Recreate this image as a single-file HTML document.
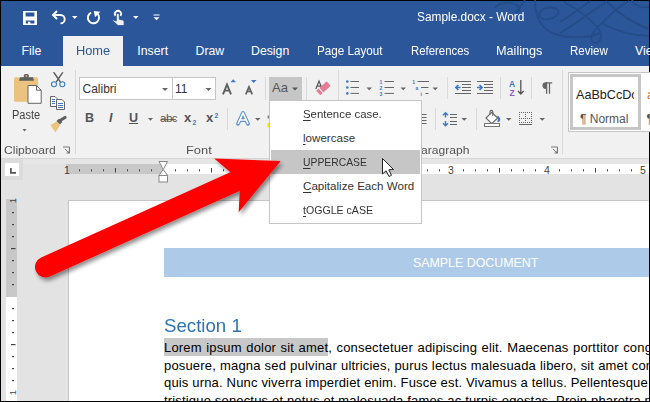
<!DOCTYPE html>
<html><head><meta charset="utf-8">
<style>
*{margin:0;padding:0;box-sizing:border-box}
html,body{width:650px;height:402px;overflow:hidden;background:#000}
body{font-family:"Liberation Sans",sans-serif;position:relative}
.a{position:absolute}
svg{position:absolute;overflow:visible}
#title{left:1px;top:1px;width:648px;height:35px;background:#2B579A}
#tabs{left:1px;top:36px;width:648px;height:30px;background:#2B579A}
.tab{position:absolute;top:36px;height:30px;color:#fff;font-size:12.3px;line-height:31px;white-space:nowrap}
#ribbon{left:1px;top:66px;width:648px;height:92px;background:#F1F1F1}
#rbline{left:1px;top:158px;width:648px;height:1px;background:#D6D6D6}
#docbg{left:1px;top:159px;width:648px;height:242px;background:#E3E3E3}
#page{left:68px;top:200px;width:581px;height:201px;background:#fff;border-left:1px solid #C6C6C6;border-top:1px solid #C6C6C6}
.lbl{position:absolute;font-size:11.5px;color:#555;white-space:nowrap;line-height:14px;transform:scaleX(1.05);transform-origin:0 0}
.sep{position:absolute;width:1px;background:#D9D9D9}
.dd{position:absolute;width:0;height:0;border-left:3px solid transparent;border-right:3px solid transparent;border-top:3px solid #666}
.mi{position:absolute;left:303px;font-size:11.6px;color:#333;white-space:nowrap;line-height:14px}
.mi u{text-decoration:underline;text-decoration-thickness:1px;text-underline-offset:1.5px}
.body{position:absolute;left:164px;font-size:13px;letter-spacing:0.17px;color:#000;white-space:nowrap;line-height:17px}
</style></head><body>
<div class="a" id="title"></div>
<div class="a" id="tabs"></div>
<div class="a" id="ribbon"></div>
<div class="a" id="rbline"></div>
<div class="a" id="docbg"></div>

<!-- swirl decoration -->
<svg style="left:0;top:0" width="650" height="66" viewBox="0 0 650 66">
 <g fill="none" stroke="#244C89" stroke-width="1.9">
  <path d="M495 8 C498 3 508 1 515 4 C519 6 520 9 519 12"/>
  <path d="M516 13 C519 8 522 4 525 0"/>
  <path d="M535 0 C535 8 536 16 540 22 C545 30 555 36 570 37 C585 38 592 36 600 33"/>
  <path d="M541 18 C536 14 542 7 551 7.5 C558 8 561 12 556 16 C551 20 544 20 541 18"/>
  <path d="M560 33 C575 25 590 12 606 2"/>
  <path d="M564 2 C575 8 590 18 598 28 C603 34 601 43 596 43 C590 43 589 35 598 27 C605 20 615 8 629 1"/>
  <path d="M606 1 C615 10 630 22 649 29"/>
  <path d="M603 24 C615 30 630 36 649 36"/>
  <path d="M560 22 C570 16 580 8 591 1"/>
  <path d="M632 0 C634 5 640 8 649 7"/>
 </g>
</svg>

<!-- quick access toolbar -->
<svg style="left:0;top:0" width="170" height="36" viewBox="0 0 170 36">
 <path fill="#fff" fill-rule="evenodd" d="M23 11 H37 V25 H23 Z M25.6 12.4 V16.6 H34.4 V12.4 Z M25.8 20.6 V23.6 H28 V21.8 H30.3 V23.6 H34.4 V20.6 Z"/>
 <g fill="none" stroke="#fff" stroke-width="1.9">
  <path d="M53 15 H60.5 A4.2 4.2 0 0 1 60.5 23.4"/>
  <path d="M57 11 L53 15 L57 19"/>
  <path d="M91.1 12.6 A5.6 5.6 0 1 0 97.2 13.5"/>
 </g>
 <path d="M93.8 11 L100.3 11.8 L95 17.3 Z" fill="#fff"/>
 <path d="M72 16 H77.5 L74.75 19 Z" fill="#fff"/>
 <path d="M133 16 H138.5 L135.75 19 Z" fill="#fff"/>
 <path d="M115.6 15.9 A3.1 3.1 0 1 1 120.4 15.9" fill="none" stroke="#fff" stroke-width="1.8"/>
 <path d="M116.3 21 V14.8 A1.5 1.5 0 0 1 119.3 14.8 V19.3 L122.8 20 C123.9 20.4 124.2 21.2 124.1 22.5 V25.6 H118 L112.6 20.6 L113.6 19.9 L116 21 Z" fill="#F1F1F1" stroke="#2B579A" stroke-width="0.9"/>
 <path d="M153.5 15 H159.5" stroke="#fff" stroke-width="1"/>
 <path d="M153.5 17.3 H159.5 L156.5 20.3 Z" fill="#fff"/>
</svg>

<!-- title text -->
<div class="a" style="left:417.3px;top:10px;color:#fff;font-size:12.3px;white-space:nowrap;line-height:14px;transform:scaleX(0.965);transform-origin:0 0">Sample.docx - Word</div>

<!-- tabs -->
<div class="a" style="left:63px;top:36px;width:60px;height:30px;background:#F1F1F1"></div>
<div class="tab" style="left:21.5px">File</div>
<div class="tab" style="left:75.5px;color:#2B579A;transform:scaleX(1.04);transform-origin:0 0">Home</div>
<div class="tab" style="left:137.3px">Insert</div>
<div class="tab" style="left:195.5px">Draw</div>
<div class="tab" style="left:251px">Design</div>
<div class="tab" style="left:316.6px;transform:scaleX(0.95);transform-origin:0 0">Page Layout</div>
<div class="tab" style="left:410.6px;transform:scaleX(0.925);transform-origin:0 0">References</div>
<div class="tab" style="left:496px;transform:scaleX(1.03);transform-origin:0 0">Mailings</div>
<div class="tab" style="left:570px;transform:scaleX(0.94);transform-origin:0 0">Review</div>
<div class="tab" style="left:635px">View</div>

<!-- ribbon separators -->
<div class="sep" style="left:75px;top:70px;height:84px"></div>
<div class="sep" style="left:562px;top:70px;height:84px"></div>
<div class="sep" style="left:265px;top:77px;height:23px"></div>
<div class="sep" style="left:306px;top:77px;height:23px"></div>
<div class="sep" style="left:338px;top:70px;height:84px"></div>
<div class="sep" style="left:447px;top:77px;height:22px"></div>
<div class="sep" style="left:500px;top:77px;height:22px"></div>
<div class="sep" style="left:531px;top:77px;height:22px"></div>
<div class="sep" style="left:227px;top:108px;height:22px"></div>
<div class="sep" style="left:435px;top:108px;height:22px"></div>
<div class="sep" style="left:476px;top:108px;height:22px"></div>

<div class="lbl" style="left:4px;top:143px">Clipboard</div>
<div class="lbl" style="left:186px;top:143px;transform:scaleX(1.12)">Font</div>
<div class="lbl" style="left:413px;top:143px">Paragraph</div>


<!-- CLIPBOARD -->
<svg style="left:0;top:66px" width="80" height="92" viewBox="0 66 80 92">
 <rect x="14" y="77.3" width="24" height="24.5" rx="1.5" fill="#EBC27E"/>
 <path d="M19 80.8 L20 77.3 H33 L34 80.8 Z" fill="#5E5E5E"/>
 <rect x="23.8" y="74" width="5" height="4" rx="1.5" fill="#5E5E5E"/>
 <rect x="25.4" y="75.3" width="1.8" height="1.4" fill="#EBC27E"/>
 <path d="M28 85.5 H36.5 L41.2 90.2 V103.3 H28 Z" fill="#fff" stroke="#666" stroke-width="1"/>
 <path d="M36.5 85.5 V90.2 H41.2" fill="none" stroke="#666" stroke-width="1"/>
 <!-- scissors -->
 <path d="M52.8 72.3 L54.6 72.3 L58.3 77.5 L62 72.3 L63.6 72.3 L59.2 79 L61 81.8 L59.9 82.5 L58.3 80.2 L56.7 82.5 L55.6 81.8 L57.4 79 Z" fill="#5E5E5E"/>
 <circle cx="54" cy="84.3" r="2.5" fill="none" stroke="#3C78C3" stroke-width="1.1"/>
 <circle cx="62.3" cy="84.3" r="2.5" fill="none" stroke="#3C78C3" stroke-width="1.1"/>
 <!-- copy -->
 <path d="M50.5 96.5 H55 L57.5 99 V106.5 H50.5 Z" fill="#fff" stroke="#666" stroke-width="1"/>
 <path d="M52 99.5 H55 M52 101.5 H55 M52 103.5 H55" stroke="#3C78C3" stroke-width="1"/>
 <path d="M56.5 99.5 H62 L64.5 102 V109.5 H56.5 Z" fill="#fff" stroke="#666" stroke-width="1"/>
 <path d="M58 103.5 H63 M58 105.5 H63 M58 107.5 H63" stroke="#3C78C3" stroke-width="1"/>
 <!-- format painter -->
 <path d="M50.5 125 L56.8 121.5 L60 125 L55.5 132.5 Z" fill="#EBC27E"/>
 <path d="M56.5 121 L59 118.8 L62.3 122 L60 124.5 Z" fill="#5E5E5E"/>
 <path d="M60 120.5 L65 117.5" stroke="#5E5E5E" stroke-width="3.2" stroke-linecap="round"/>
 <path d="M26.5 129 H22.5 L24.5 131.5 Z" fill="#666"/>
 <path d="M63 147 H69.5 V153.5" fill="none" stroke="#777" stroke-width="1"/>
 <path d="M65 149 L69 153 M66.5 153 H69 V150.5" fill="none" stroke="#777" stroke-width="1"/>
</svg>
<div class="a" style="left:12.4px;top:108px;font-size:12px;color:#444;line-height:14px;transform:scaleX(0.92);transform-origin:0 0">Paste</div>

<!-- FONT GROUP -->
<div class="a" style="left:79px;top:77px;width:94px;height:23px;background:#fff;border:1px solid #C6C6C6"></div>
<div class="a" style="left:172px;top:77px;width:44px;height:23px;background:#fff;border:1px solid #C6C6C6"></div>
<div class="a" style="left:82.5px;top:81.5px;font-size:12px;color:#333;line-height:14px">Calibri</div>
<div class="a" style="left:175px;top:81.5px;font-size:12px;color:#333;line-height:14px">11</div>
<div class="a" style="left:269px;top:77px;width:33px;height:23px;background:#C6C6C6"></div>
<div class="a" style="left:272px;top:81px;font-size:13px;color:#555;line-height:14px">Aa</div>
<svg style="left:0;top:0" width="650" height="160" viewBox="0 0 650 160">
 <path d="M162 88 H168 L165 91 Z M205.5 88 H211.5 L208.5 91 Z" fill="#666"/>
 <path d="M292 87.5 H298 L295 90.5 Z" fill="#555"/>
 <!-- grow/shrink -->
 <path d="M223 94.3 L227 84.5 L231 94.3 M224.5 90.6 H229.5" stroke="#5E5E5E" stroke-width="1.9" fill="none"/>
 <path d="M230.5 82.3 L233.2 79.2 L235.9 82.3 Z" fill="#3C78C3"/>
 <path d="M245.8 94.3 L249 86.8 L252.2 94.3 M247 91.5 H251" stroke="#5E5E5E" stroke-width="1.7" fill="none"/>
 <path d="M251 80 H256.5 L253.75 83 Z" fill="#3C78C3"/>
 <!-- clear formatting -->
 <path d="M315.8 89 L319 81 L322.2 89 M317 86.2 H321" stroke="#555" stroke-width="1.2" fill="none"/>
 <g transform="rotate(-42 323.5 88.3)">
  <rect x="316.5" y="85.3" width="14" height="6" rx="0.6" fill="#E57C93"/>
  <rect x="319.6" y="84.8" width="1.1" height="7" fill="#F1F1F1"/>
 </g>
 <!-- B I U abc x2 x2 -->
 <path d="M148 118 H153 L150.5 120.8 Z" fill="#666"/>
 <path d="M160.8 119.6 H176" stroke="#666" stroke-width="1"/>
 <path d="M255 118 H260.5 L257.75 120.8 Z" fill="#666"/>
 <path d="M238 123.8 L243 113 L248 123.8 M240 120 H246" stroke="#4A86CC" stroke-width="3.8" fill="none" stroke-linejoin="round" stroke-linecap="round" opacity="0.9"/>
 <path d="M238 123.8 L243 113 L248 123.8 M240 120 H246" stroke="#fff" stroke-width="1.7" fill="none" stroke-linejoin="round"/>
 <rect x="267.5" y="123" width="2" height="4.3" fill="#F2E600"/>
 <rect x="267.5" y="115.5" width="2" height="3" fill="#888"/>
</svg>
<div class="a" style="left:85px;top:111px;font-size:12.5px;font-weight:bold;color:#555;line-height:14px">B</div>
<div class="a" style="left:109px;top:111px;font-size:12.5px;font-style:italic;font-weight:bold;color:#555;line-height:14px">I</div>
<div class="a" style="left:129px;top:111px;font-size:12.5px;font-weight:bold;color:#555;line-height:14px;text-decoration:underline">U</div>
<div class="a" style="left:160px;top:111px;font-size:11.5px;color:#555;line-height:14px;letter-spacing:-0.5px">abc</div>
<div class="a" style="left:184px;top:111px;font-size:13px;font-weight:bold;color:#555;line-height:14px">x</div>
<div class="a" style="left:192.5px;top:119px;font-size:6.5px;font-weight:bold;color:#3C78C3;line-height:8px">2</div>
<div class="a" style="left:206px;top:111px;font-size:13px;font-weight:bold;color:#555;line-height:14px">x</div>
<div class="a" style="left:214.5px;top:111.5px;font-size:6.5px;font-weight:bold;color:#3C78C3;line-height:8px">2</div>


<!-- PARAGRAPH GROUP -->
<svg style="left:0;top:0" width="650" height="160" viewBox="0 0 650 160">
 <g fill="#3C78C3">
  <circle cx="347.3" cy="81.5" r="1.3"/><circle cx="347.3" cy="87.5" r="1.3"/><circle cx="347.3" cy="93.4" r="1.3"/>
 </g>
 <path d="M350.5 81.5 H359 M350.5 87.5 H359 M350.5 93.4 H359" stroke="#666" stroke-width="1"/>
 <path d="M366.5 87.5 H372 L369.25 90.3 Z M400.5 87.5 H406 L403.25 90.3 Z M432.5 87.5 H438 L435.25 90.3 Z" fill="#666"/>
 <g fill="#3C78C3" font-family="Liberation Sans" font-size="5" font-weight="bold">
  <text x="379.5" y="84">1</text><text x="379.5" y="90">2</text><text x="379.5" y="96">3</text>
  <text x="412.3" y="84">1</text><text x="415.5" y="90">a</text><text x="420.5" y="96">i</text>
 </g>
 <path d="M384.5 81.5 H394 M384.5 87.5 H394 M384.5 93.4 H394" stroke="#666" stroke-width="1"/>
 <path d="M417.5 81.5 H429 M421 87.5 H428.5 M425.5 93.5 H428.5" stroke="#666" stroke-width="1"/>
 <!-- indent -->
 <path d="M455 81.5 H471 M462 84.5 H471 M462 87.5 H471 M462 90.5 H471 M455 93.5 H471" stroke="#666" stroke-width="1"/>
 <path d="M460.5 87.5 H456 M458.3 85 L455.8 87.5 L458.3 90" stroke="#3C78C3" stroke-width="1.6" fill="none"/>
 <path d="M477 81.5 H493 M484 84.5 H493 M484 87.5 H493 M484 90.5 H493 M477 93.5 H493" stroke="#666" stroke-width="1"/>
 <path d="M477 87.5 H482 M479.5 85 L482 87.5 L479.5 90" stroke="#3C78C3" stroke-width="1.6" fill="none"/>
 <!-- sort -->
 <text x="509" y="87.3" font-family="Liberation Sans" font-size="8.5" font-weight="bold" fill="#3C78C3">A</text>
 <text x="509.5" y="95.5" font-family="Liberation Sans" font-size="8.5" font-weight="bold" fill="#8E5BC5">Z</text>
 <path d="M520.8 80 V94 M518 91 L520.8 94 L523.6 91" stroke="#555" stroke-width="1.3" fill="none"/>
 <!-- pilcrow -->
 <path d="M546.6 93.8 V82.5 M549.5 93.8 V82.5 M545.5 82.8 H552.2" stroke="#666" stroke-width="1.3" fill="none"/>
 <path d="M547 82.2 H545.8 A3.3 3.3 0 0 0 545.8 88.9 H547 Z" fill="#666"/>
 <!-- row2: justify partial -->
 <path d="M421 114.5 H426.5 M421 117.5 H426.5 M421 120.5 H426.5 M421 123.5 H426.5" stroke="#666" stroke-width="1"/>
 <!-- line spacing -->
 <path d="M445.5 113 V117.5 M445.5 121 V125.5 M443 115.3 L445.5 112.8 L448 115.3 M443 123.2 L445.5 125.7 L448 123.2" stroke="#3C78C3" stroke-width="1.4" fill="none"/>
 <path d="M450 114.5 H457 M450 117.5 H457 M450 121.5 H457 M450 124.5 H457" stroke="#666" stroke-width="1"/>
 <path d="M461.5 118 H467 L464.25 120.8 Z M506 118 H511.5 L508.75 120.8 Z M539.5 118 H545 L542.25 120.8 Z" fill="#666"/>
 <!-- shading -->
 <path d="M486 118 L491.8 112.3 L497.6 118 L491.8 123.7 Z" fill="#fff" stroke="#666" stroke-width="1.1"/>
 <path d="M490 114.5 V111.8 A1.4 1.4 0 0 1 492.8 111.8 V116" fill="none" stroke="#666" stroke-width="1.1"/>
 <path d="M497.2 115.5 C499.8 116.5 501 119 499.8 121.2 C499.2 122 498.2 122.2 497.4 121.8 L498 118.5 Z" fill="#3C78C3"/>
 <rect x="484.5" y="123.5" width="15" height="3" fill="#fff" stroke="#777" stroke-width="1"/>
 <!-- borders -->
 <g fill="#666"><rect x="519" y="112" width="1" height="1"/><rect x="519" y="114" width="1" height="1"/><rect x="519" y="116" width="1" height="1"/><rect x="519" y="118" width="1" height="1"/><rect x="519" y="120" width="1" height="1"/><rect x="519" y="122" width="1" height="1"/><rect x="521" y="112" width="1" height="1"/><rect x="521" y="118" width="1" height="1"/><rect x="521" y="122" width="1" height="1"/><rect x="523" y="112" width="1" height="1"/><rect x="523" y="118" width="1" height="1"/><rect x="523" y="122" width="1" height="1"/><rect x="525" y="112" width="1" height="1"/><rect x="525" y="114" width="1" height="1"/><rect x="525" y="116" width="1" height="1"/><rect x="525" y="118" width="1" height="1"/><rect x="525" y="120" width="1" height="1"/><rect x="525" y="122" width="1" height="1"/><rect x="527" y="112" width="1" height="1"/><rect x="527" y="118" width="1" height="1"/><rect x="527" y="122" width="1" height="1"/><rect x="529" y="112" width="1" height="1"/><rect x="529" y="118" width="1" height="1"/><rect x="529" y="122" width="1" height="1"/><rect x="531" y="112" width="1" height="1"/><rect x="531" y="114" width="1" height="1"/><rect x="531" y="116" width="1" height="1"/><rect x="531" y="118" width="1" height="1"/><rect x="531" y="120" width="1" height="1"/><rect x="531" y="122" width="1" height="1"/></g>
 <rect x="519" y="124" width="13" height="1" fill="#666"/>
 <path d="M551 147 H557.5 V153.5 M553 149 L557 153 M554.5 153 H557 V150.5" fill="none" stroke="#777" stroke-width="1"/>
</svg>

<!-- STYLES -->
<div class="a" style="left:568px;top:72px;width:90px;height:60px;border:1px solid #C6C6C6;background:#fff"></div>
<div class="a" style="left:570px;top:74px;width:71px;height:56px;border:3.5px solid #C6C6C6;background:#fff"></div>
<div class="a" style="left:576px;top:88px;font-size:12.6px;color:#222;line-height:14px;white-space:nowrap;width:58px;overflow:hidden">AaBbCcDc</div>
<div class="a" style="left:580px;top:111.5px;font-size:12px;color:#555;line-height:14px;white-space:nowrap">&para; Normal</div>
<div class="a" style="left:647px;top:88px;font-size:12.6px;color:#C8701E;line-height:14px;white-space:nowrap">a</div>
<div class="a" style="left:646.5px;top:111.5px;font-size:12px;color:#555;line-height:14px;white-space:nowrap">&para;</div>


<!-- RULER -->
<div class="a" style="left:23px;top:159px;width:626px;height:5px;background:#E6E6E6"></div>
<div class="a" style="left:1px;top:159px;width:22px;height:20.5px;background:#DCDCDC"></div>
<div class="a" style="left:5px;top:162.5px;width:14px;height:13.5px;background:#fff"></div>
<svg style="left:0;top:0" width="650" height="402" viewBox="0 0 650 402">
 <path d="M10.9 168 V172.8 H16" stroke="#555" stroke-width="1.7" fill="none"/>
 <rect x="66" y="164" width="97" height="10" fill="#C8C8C8"/>
 <rect x="163" y="164" width="486" height="10" fill="#fff"/>
 <g fill="#444"><rect x="79" y="169.3" width="1" height="2"/><rect x="91" y="169.3" width="1" height="2"/><rect x="103" y="169.3" width="1" height="2"/><rect x="115" y="168" width="1" height="4.5"/><rect x="127" y="169.3" width="1" height="2"/><rect x="139" y="169.3" width="1" height="2"/><rect x="151" y="169.3" width="1" height="2"/><rect x="175" y="169.3" width="1" height="2"/><rect x="187" y="169.3" width="1" height="2"/><rect x="199" y="169.3" width="1" height="2"/><rect x="211" y="168" width="1" height="4.5"/><rect x="223" y="169.3" width="1" height="2"/><rect x="235" y="169.3" width="1" height="2"/><rect x="247" y="169.3" width="1" height="2"/><rect x="271" y="169.3" width="1" height="2"/><rect x="283" y="169.3" width="1" height="2"/><rect x="295" y="169.3" width="1" height="2"/><rect x="307" y="168" width="1" height="4.5"/><rect x="319" y="169.3" width="1" height="2"/><rect x="331" y="169.3" width="1" height="2"/><rect x="343" y="169.3" width="1" height="2"/><rect x="367" y="169.3" width="1" height="2"/><rect x="379" y="169.3" width="1" height="2"/><rect x="391" y="169.3" width="1" height="2"/><rect x="403" y="168" width="1" height="4.5"/><rect x="415" y="169.3" width="1" height="2"/><rect x="427" y="169.3" width="1" height="2"/><rect x="439" y="169.3" width="1" height="2"/><rect x="463" y="169.3" width="1" height="2"/><rect x="475" y="169.3" width="1" height="2"/><rect x="487" y="169.3" width="1" height="2"/><rect x="499" y="168" width="1" height="4.5"/><rect x="511" y="169.3" width="1" height="2"/><rect x="523" y="169.3" width="1" height="2"/><rect x="535" y="169.3" width="1" height="2"/><rect x="559" y="169.3" width="1" height="2"/><rect x="571" y="169.3" width="1" height="2"/><rect x="583" y="169.3" width="1" height="2"/><rect x="595" y="168" width="1" height="4.5"/><rect x="607" y="169.3" width="1" height="2"/><rect x="619" y="169.3" width="1" height="2"/><rect x="631" y="169.3" width="1" height="2"/><text x="67" y="174" font-family="Liberation Sans" font-size="10.5" text-anchor="middle">1</text><text x="259" y="174" font-family="Liberation Sans" font-size="10.5" text-anchor="middle">1</text><text x="355" y="174" font-family="Liberation Sans" font-size="10.5" text-anchor="middle">2</text><text x="451" y="174" font-family="Liberation Sans" font-size="10.5" text-anchor="middle">3</text><text x="547" y="174" font-family="Liberation Sans" font-size="10.5" text-anchor="middle">4</text><text x="643" y="174" font-family="Liberation Sans" font-size="10.5" text-anchor="middle">5</text></g>
 <path d="M159 161.5 H167.5 L163.25 169.5 L167.5 175.5 H159 L163.25 169.5 Z" fill="#fff" stroke="#888" stroke-width="1"/><rect x="159" y="175.5" width="8.5" height="6.5" fill="#fff" stroke="#888" stroke-width="1"/>
 <rect x="6" y="199" width="11" height="98" fill="#C8C8C8"/>
 <rect x="6" y="297" width="11" height="104" fill="#fff"/>
 <g fill="#444"><rect x="12" y="212.0" width="2" height="1.2"/><rect x="12" y="224.0" width="2" height="1.2"/><rect x="12" y="236.0" width="2" height="1.2"/><rect x="11" y="248.0" width="4.5" height="1.2"/><rect x="12" y="260.0" width="2" height="1.2"/><rect x="12" y="272.0" width="2" height="1.2"/><rect x="12" y="284.0" width="2" height="1.2"/><rect x="12" y="308.0" width="2" height="1.2"/><rect x="12" y="320.0" width="2" height="1.2"/><rect x="12" y="332.0" width="2" height="1.2"/><rect x="11" y="344.0" width="4.5" height="1.2"/><rect x="12" y="356.0" width="2" height="1.2"/><rect x="12" y="368.0" width="2" height="1.2"/><rect x="12" y="380.0" width="2" height="1.2"/><text x="0" y="0" transform="translate(15.8 200.7) rotate(-90)" font-family="Liberation Sans" font-size="9.5" text-anchor="middle">1</text><text x="0" y="0" transform="translate(15.8 392.5) rotate(-90)" font-family="Liberation Sans" font-size="9.5" text-anchor="middle">1</text></g>
</svg>

<!-- PAGE -->
<div class="a" id="page"></div>
<div class="a" style="left:164px;top:248px;width:485px;height:29px;background:#ADCBE9"></div>
<div class="a" style="left:413px;top:257px;font-size:12.4px;color:#fff;line-height:12px;white-space:nowrap">SAMPLE DOCUMENT</div>
<div class="a" style="left:164px;top:316px;font-size:19px;color:#2E74B5;line-height:20px;white-space:nowrap;transform:scaleX(0.982);transform-origin:0 0">Section 1</div>
<div class="a" style="left:164px;top:338px;width:164px;height:18px;background:#C8C8C8"></div>
<div class="body" style="top:339px;word-spacing:0.75px">Lorem ipsum dolor sit amet, consectetuer adipiscing elit. Maecenas porttitor congue</div>
<div class="body" style="top:356.7px;word-spacing:0.25px">posuere, magna sed pulvinar ultricies, purus lectus malesuada libero, sit amet commodo</div>
<div class="body" style="top:374.3px">quis urna. Nunc viverra imperdiet enim. Fusce est. Vivamus a tellus. Pellentesque habitant</div>
<div class="body" style="top:392px">tristique senectus et netus et malesuada fames ac turpis egestas. Proin pharetra nonummy</div>

<!-- DROPDOWN MENU -->
<div class="a" style="left:269px;top:100px;width:153px;height:124px;background:#fff;border:1px solid #C6C6C6"></div>
<div class="a" style="left:271px;top:150px;width:149px;height:24px;background:#C6C6C6"></div>
<div class="mi" style="top:107px;transform:scaleX(0.985);transform-origin:0 0"><u>S</u>entence case.</div>
<div class="mi" style="top:131px"><u>l</u>owercase</div>
<div class="mi" style="top:155px;transform:scaleX(0.893);transform-origin:0 0"><u>U</u>PPERCASE</div>
<div class="mi" style="top:179px"><u>C</u>apitalize Each Word</div>
<div class="mi" style="top:203px;transform:scaleX(0.913);transform-origin:0 0"><u>t</u>OGGLE cASE</div>
<svg style="left:0;top:0" width="650" height="402" viewBox="0 0 650 402">
 <path d="M382.5 158.5 V174 L386 170.8 L389 176.5 L391.5 175.3 L388.8 169.8 L393.5 169.5 Z" fill="#fff" stroke="#222" stroke-width="1" stroke-linejoin="round"/>
</svg>

<!-- RED ARROW -->
<svg style="left:0;top:0" width="650" height="402" viewBox="0 0 650 402">
 <defs>
  <filter id="sh" x="-20%" y="-20%" width="140%" height="140%">
   <feGaussianBlur in="SourceAlpha" stdDeviation="2"/>
   <feOffset dx="2.2" dy="2.5" result="b"/>
   <feComponentTransfer><feFuncA type="linear" slope="0.45"/></feComponentTransfer>
   <feMerge><feMergeNode/><feMergeNode in="SourceGraphic"/></feMerge>
  </filter>
 </defs>
 <g filter="url(#sh)" fill="#FF0000">
  <path d="M45.5 267 L234 182" stroke="#FF0000" stroke-width="21" stroke-linecap="round"/>
  <path d="M214.2 158.4 L280.7 161.1 L238.7 212.3 L239.7 190.5 L230.8 172.5 Z"/>
 </g>
</svg>
</body></html>
